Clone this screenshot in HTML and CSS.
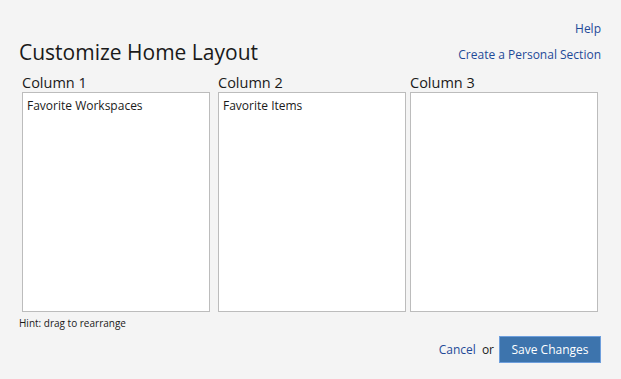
FILE: index.html
```html
<!DOCTYPE html>
<html>
<head>
<meta charset="utf-8">
<link rel="stylesheet" href="styles.css">
</head>
<body>
<div class="page">
  <div class="help-row"><a class="link" href="#">Help</a></div>
  <div class="title-row">
    <h1 class="title">Customize Home Layout</h1>
    <a class="link create" href="#">Create a Personal Section</a>
  </div>
  <div class="columns">
    <div class="col col1">
      <div class="col-label">Column 1</div>
      <div class="col-box"><div class="item">Favorite Workspaces</div></div>
    </div>
    <div class="col col2">
      <div class="col-label">Column 2</div>
      <div class="col-box"><div class="item">Favorite Items</div></div>
    </div>
    <div class="col col3">
      <div class="col-label">Column 3</div>
      <div class="col-box"></div>
    </div>
  </div>
  <div class="hint">Hint: drag to rearrange</div>
  <div class="actions">
    <a class="link cancel" href="#">Cancel</a>
    <span class="or">or</span>
    <button class="save">Save Changes</button>
  </div>
</div>
</body>
</html>
```
FILE: styles.css
```css
html, body {
  margin: 0;
  padding: 0;
  background: #f4f4f4;
}
body {
  font-family: "Open Sans", "Liberation Sans", sans-serif;
  color: #1a1a1a;
}
.page {
  width: 621px;
  height: 379px;
  box-sizing: border-box;
  padding: 19px 20px 0 19px;
}
.link {
  color: #1f4a98;
  text-decoration: none;
  font-size: 12px;
}
.help-row {
  text-align: right;
  line-height: 17px;
  height: 17px;
}
.title-row {
  display: flex;
  justify-content: space-between;
  align-items: center;
  margin-top: 1px;
  height: 30px;
}
.title {
  margin: 0;
  font-size: 21px;
  font-weight: normal;
  line-height: 30px;
  color: #1a1a1a;
}
.create {
  line-height: 16px;
  margin-top: 5px;
}
.columns {
  display: flex;
  margin-left: 3px;
  margin-top: 7px;
}
.col2 { margin-left: 8px; }
.col3 { margin-left: 4px; }
.col-label {
  font-size: 14.5px;
  line-height: 18px;
  height: 18px;
}
.col-box {
  width: 188px;
  height: 220px;
  box-sizing: border-box;
  border: 1px solid #bcbcbc;
  background: #fff;
  padding: 4px 4px;
}
.item {
  font-size: 12px;
  line-height: 18px;
}
.hint {
  font-size: 10px;
  line-height: 13px;
  margin-top: 5px;
}
.actions {
  display: flex;
  justify-content: flex-end;
  align-items: center;
  margin-top: 6px;
}
.cancel {
  font-size: 12px;
}
.or {
  font-size: 12px;
  margin: 0 5px 0 6px;
}
.save {
  width: 102px;
  height: 27px;
  background: #3d74ad;
  border: 1px solid #6e9fdd;
  color: #fff;
  font-family: "Open Sans", "Liberation Sans", sans-serif;
  font-size: 12px;
  padding: 0;
}
```
